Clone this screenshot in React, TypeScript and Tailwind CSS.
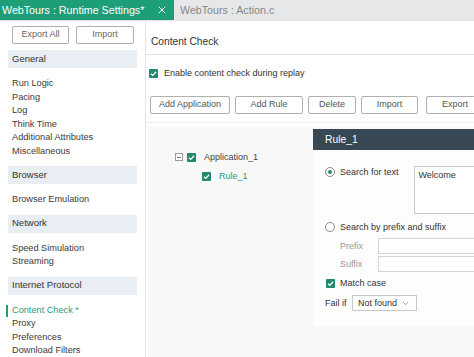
import { X, ChevronDown } from 'lucide-react';

const font = { fontFamily: '"Liberation Sans", Arial, sans-serif' };

function Check({ size = 9 }: { size?: number }) {
  return (
    <svg width={size} height={size} viewBox="0 0 10 10" className="shrink-0">
      <rect x="0" y="0" width="10" height="10" rx="1" fill="#1f8a6c" />
      <path d="M2.2 5.2 L4.2 7.1 L7.9 3.1" stroke="#fff" strokeWidth="1.5" fill="none" />
    </svg>
  );
}

function Radio({ on }: { on?: boolean }) {
  return (
    <span className="w-[10px] h-[10px] rounded-full border border-[#8a8a8a] bg-white flex items-center justify-center shrink-0">
      {on && <span className="w-[4px] h-[4px] rounded-full bg-[#2a8a6e]" />}
    </span>
  );
}

const sections = [
  { title: 'General', items: ['Run Logic', 'Pacing', 'Log', 'Think Time', 'Additional Attributes', 'Miscellaneous'] },
  { title: 'Browser', items: ['Browser Emulation'] },
  { title: 'Network', items: ['Speed Simulation', 'Streaming'] },
  { title: 'Internet Protocol', items: ['Content Check *', 'Proxy', 'Preferences', 'Download Filters'] },
];

export default function App() {
  return (
    <div className="w-[474px] h-[357px] overflow-hidden bg-white flex flex-col text-[#333]" style={font}>
      {/* tabs */}
      <div className="h-[21px] flex shrink-0 border-b border-[#e2e2e2]">
        <div className="w-[174px] bg-[#1e9e78] text-white text-[10.7px] whitespace-nowrap flex items-center justify-between pl-[2px] pr-[6px]">
          <span>WebTours : Runtime Settings*</span>
          <X size={12} strokeWidth={2} />
        </div>
        <div className="flex-1 bg-[#e5e7e9] text-[#888] text-[10.7px] whitespace-nowrap flex items-center pl-[6px]">WebTours : Action.c</div>
      </div>

      <div className="flex flex-1 min-h-0">
        {/* sidebar */}
        <div className="w-[146px] shrink-0 border-r border-[#e3e3e3] pt-[5px]">
          <div className="flex gap-[7px] pl-[12px]">
            <button className="w-[57px] h-[18px] border border-[#b0b0b0] rounded-[2px] text-[9px] text-[#666]">Export All</button>
            <button className="w-[58px] h-[18px] border border-[#b0b0b0] rounded-[2px] text-[9px] text-[#666]">Import</button>
          </div>
          <div className="mt-[6px] px-[8px]">
            {sections.map(s => (
              <div key={s.title}>
                <div className="h-[18px] bg-[#e8eef3] text-[9.5px] text-[#333] flex items-center pl-[4px]">{s.title}</div>
                <div className="pt-[9px] pb-[8px]">
                  {s.items.map(it => (
                    <div key={it} className="relative h-[13.5px] text-[9.2px] leading-[13.5px] pl-[4px] whitespace-nowrap">
                      {it === 'Content Check *' && <span className="absolute left-[-2px] top-[1px] w-[2px] h-[12px] bg-[#1e9e78]" />}
                      <span className={it === 'Content Check *' ? 'text-[#2a9c79]' : 'text-[#3a3a3a]'}>{it}</span>
                    </div>
                  ))}
                </div>
              </div>
            ))}
          </div>
        </div>

        {/* main */}
        <div className="flex-1 min-w-0 overflow-hidden flex flex-col">
          <div className="h-[34px] shrink-0 border-b border-[#e3e3e3] pl-[5px] pt-[13px] text-[10.2px] text-[#333]">Content Check</div>
          <div className="flex items-center gap-[6px] pl-[3px] mt-[12px] text-[9px] leading-[12px] text-[#333]">
            <Check />
            <span>Enable content check during replay</span>
          </div>
          <div className="flex gap-[5px] pl-[4px] mt-[17px] shrink-0">
            {[
              ['Add Application', 'w-[80px]'],
              ['Add Rule', 'w-[68px]'],
              ['Delete', 'w-[48px]'],
              ['Import', 'w-[57px]'],
              ['Export', 'w-[58px] ml-[3px]'],
            ].map(([t, w]) => (
              <button key={t} className={`${w} shrink-0 h-[18px] border border-[#b0b0b0] rounded-[2px] text-[9px] text-[#555]`}>{t}</button>
            ))}
          </div>
          <div className="mt-[8px] border-t border-[#ececec] pt-[3px] flex-1 min-h-0">
            <div className="h-full ml-[1px] bg-[#f8f8f8] flex pt-[3px]">
              {/* tree */}
              <div className="w-[166px] shrink-0 pt-[22px] pl-[28px] text-[9px] leading-[12px]">
                <div className="flex items-center h-[12px]">
                  <span className="w-[8px] h-[8px] border border-[#9a9a9a] bg-white flex items-center justify-center mr-[4px]">
                    <span className="w-[4px] h-[1px] bg-[#777]" />
                  </span>
                  <Check />
                  <span className="ml-[8px] text-[#444]">Application_1</span>
                </div>
                <div className="flex items-center h-[12px] mt-[7px] pl-[27px]">
                  <Check />
                  <span className="ml-[8px] text-[#2a9c79]">Rule_1</span>
                </div>
              </div>

              {/* rule panel */}
              <div className="w-[200px] shrink-0 flex flex-col h-[197px]">
                <div className="h-[21px] bg-[#384955] text-white text-[10.3px] flex items-center pl-[12px] shrink-0">Rule_1</div>
                <div className="flex-1 bg-[#fdfdfd] pl-[12px] pt-[16px] text-[9px] leading-[12px] text-[#333]">
                  <div className="flex items-start">
                    <div className="w-[89px] flex items-center gap-[5px]">
                      <Radio on />
                      <span>Search for text</span>
                    </div>
                    <div className="w-[100px] h-[48px] border border-[#c8c8c8] bg-white pl-[4px] pt-[2px] text-[#333]">Welcome</div>
                  </div>
                  <div className="flex items-center gap-[5px] mt-[7px]">
                    <Radio />
                    <span>Search by prefix and suffix</span>
                  </div>
                  <div className="flex items-center mt-[5px] pl-[15px]">
                    <span className="w-[38px] text-[#999]">Prefix</span>
                    <div className="w-[120px] h-[16px] border border-[#d4d4d4] bg-white" />
                  </div>
                  <div className="flex items-center mt-[2px] pl-[15px]">
                    <span className="w-[38px] text-[#999]">Suffix</span>
                    <div className="w-[120px] h-[16px] border border-[#d4d4d4] bg-white" />
                  </div>
                  <div className="flex items-center gap-[5px] mt-[5px] pl-[1px]">
                    <Check />
                    <span>Match case</span>
                  </div>
                  <div className="flex items-center mt-[6px]">
                    <span className="w-[27px]">Fail if</span>
                    <div className="w-[65px] h-[16px] border border-[#c8c8c8] bg-white flex items-center justify-between pl-[5px] pr-[6px] whitespace-nowrap">
                      <span>Not found</span>
                      <ChevronDown size={9} className="text-[#777]" />
                    </div>
                  </div>
                </div>
              </div>
            </div>
          </div>
        </div>
      </div>
    </div>
  );
}
